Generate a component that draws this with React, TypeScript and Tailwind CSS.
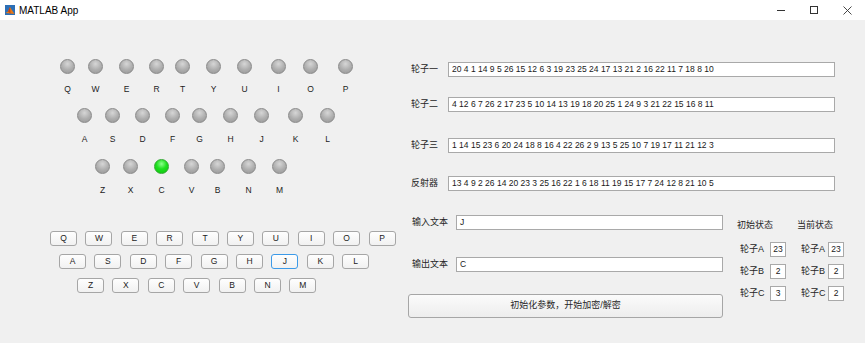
import React from 'react';

// 灯泡：每行的字母和与前一个灯之间的间距
interface Lamp {
  k: string;
  ml: string;
}

const lampRows: { pl: string; pt: string; items: Lamp[] }[] = [
  {
    pl: 'pl-[60px]',
    pt: 'pt-[38.5px]',
    items: [
      { k: 'Q', ml: 'ml-0' },
      { k: 'W', ml: 'ml-[13px]' },
      { k: 'E', ml: 'ml-[16px]' },
      { k: 'R', ml: 'ml-[15px]' },
      { k: 'T', ml: 'ml-[11px]' },
      { k: 'Y', ml: 'ml-[16px]' },
      { k: 'U', ml: 'ml-[16px]' },
      { k: 'I', ml: 'ml-[19px]' },
      { k: 'O', ml: 'ml-[17px]' },
      { k: 'P', ml: 'ml-[20px]' },
    ],
  },
  {
    pl: 'pl-[77px]',
    pt: 'pt-[15px]',
    items: [
      { k: 'A', ml: 'ml-0' },
      { k: 'S', ml: 'ml-[13px]' },
      { k: 'D', ml: 'ml-[15px]' },
      { k: 'F', ml: 'ml-[15px]' },
      { k: 'G', ml: 'ml-[12px]' },
      { k: 'H', ml: 'ml-[16px]' },
      { k: 'J', ml: 'ml-[16px]' },
      { k: 'K', ml: 'ml-[19px]' },
      { k: 'L', ml: 'ml-[17px]' },
    ],
  },
  {
    pl: 'pl-[95px]',
    pt: 'pt-[15.5px]',
    items: [
      { k: 'Z', ml: 'ml-0' },
      { k: 'X', ml: 'ml-[13px]' },
      { k: 'C', ml: 'ml-[16px]' },
      { k: 'V', ml: 'ml-[15px]' },
      { k: 'B', ml: 'ml-[11px]' },
      { k: 'N', ml: 'ml-[16px]' },
      { k: 'M', ml: 'ml-[16px]' },
    ],
  },
];

const keyRows = [
  { pl: 'pl-[50px]', keys: 'QWERTYUIOP'.split('') },
  { pl: 'pl-[59px]', keys: 'ASDFGHJKL'.split('') },
  { pl: 'pl-[77px]', keys: 'ZXCVBNM'.split('') },
];

const rotors = [
  { label: '轮子一', value: '20 4 1 14 9 5 26 15 12 6 3 19 23 25 24 17 13 21 2 16 22 11 7 18 8 10', mt: 'mt-[42px]' },
  { label: '轮子二', value: '4 12 6 7 26 2 17 23 5 10 14 13 19 18 20 25 1 24 9 3 21 22 15 16 8 11', mt: 'mt-[20px]' },
  { label: '轮子三', value: '1 14 15 23 6 20 24 18 8 16 4 22 26 2 9 13 5 25 10 7 19 17 11 21 12 3', mt: 'mt-[26px]' },
  { label: '反射器', value: '13 4 9 2 26 14 20 23 3 25 16 22 1 6 18 11 19 15 17 7 24 12 8 21 10 5', mt: 'mt-[23px]' },
];

const states = [
  { name: '轮子A', init: '23', cur: '23' },
  { name: '轮子B', init: '2', cur: '2' },
  { name: '轮子C', init: '3', cur: '2' },
];

function LampDot({ on }: { on: boolean }) {
  return (
    <div
      className={
        on
          ? 'w-[15px] h-[15px] rounded-full border border-[#2fa82f] bg-[radial-gradient(circle_at_50%_30%,#8dff8d_0%,#1fe01f_45%,#0cc40c_100%)]'
          : 'w-[15px] h-[15px] rounded-full border border-[#8a8a8a] bg-[radial-gradient(circle_at_50%_30%,#d6d6d6_0%,#adadad_55%,#969696_100%)]'
      }
    />
  );
}

function Field({ value, w }: { value: string; w: string }) {
  return (
    <div className={`${w} h-[15px] bg-white border border-[#a9a9a9] flex items-center px-[3px] text-[8.5px] text-[#1a1a1a] leading-none whitespace-nowrap overflow-hidden`}>
      {value}
    </div>
  );
}

function StateBox({ v }: { v: string }) {
  return (
    <div className="w-[16px] h-[15px] bg-white border border-[#a9a9a9] flex items-center justify-center text-[8.5px] leading-none text-[#1a1a1a]">
      {v}
    </div>
  );
}

export default function App() {
  return (
    <div className="w-[865px] h-[343px] bg-[#f0f0f0] flex flex-col font-['Liberation_Sans','Noto_Sans_CJK_SC',sans-serif] text-[#262626] overflow-hidden">
      {/* 标题栏 */}
      <div className="h-[20px] bg-white flex items-center shrink-0">
        <svg className="ml-[5px]" width="10" height="10" viewBox="0 0 10 10">
          <rect x="0" y="0" width="10" height="10" fill="#2c6fb6" />
          <path d="M0.5 8 L3 6.5 L5 2 L6.5 4.5 L9.5 9 L5.5 8.5 Z" fill="#e67a18" />
          <path d="M3 6.5 L5 2 L5.5 8.5 Z" fill="#c94410" />
        </svg>
        <span className="ml-[4px] text-[10px] text-black">MATLAB App</span>
        <div className="ml-auto flex items-center h-full">
          <div className="w-[36px] h-full flex items-center justify-center">
            <div className="w-[8px] h-px bg-[#333]" />
          </div>
          <div className="w-[30px] h-full flex items-center justify-center">
            <div className="w-[8px] h-[8px] border border-[#333]" />
          </div>
          <div className="w-[36px] h-full flex items-center justify-center">
            <svg width="9" height="9" viewBox="0 0 9 9">
              <path d="M0.5 0.5 L8.5 8.5 M8.5 0.5 L0.5 8.5" stroke="#333" strokeWidth="0.9" />
            </svg>
          </div>
        </div>
      </div>

      <div className="flex flex-1">
        {/* 左侧：灯板与键盘 */}
        <div className="w-[404px] shrink-0 flex flex-col">
          {lampRows.map((row, ri) => (
            <div key={ri} className={`flex ${row.pl} ${row.pt}`}>
              {row.items.map((l) => (
                <div key={l.k} className={`${l.ml} w-[15px] flex flex-col items-center`}>
                  <LampDot on={l.k === 'C'} />
                  <span className={`${ri === 0 ? 'mt-[11px]' : 'mt-[12px]'} text-[8.5px] leading-none text-[#1c1c1c]`}>{l.k}</span>
                </div>
              ))}
            </div>
          ))}

          <div className="flex flex-col gap-[8.5px] mt-[36px]">
            {keyRows.map((row, ri) => (
              <div key={ri} className={`flex gap-[8.4px] ${row.pl}`}>
                {row.keys.map((k) => (
                  <div
                    key={k}
                    className={
                      k === 'J'
                        ? 'w-[27px] h-[15px] rounded-[3px] border border-[#3c9ae8] bg-[linear-gradient(#fefefe,#f1f1f1)] flex items-center justify-center text-[8.5px] text-[#1c1c1c]'
                        : 'w-[27px] h-[15px] rounded-[3px] border border-[#a6a6a6] bg-[linear-gradient(#fefefe,#f1f1f1)] flex items-center justify-center text-[8.5px] text-[#1c1c1c]'
                    }
                  >
                    {k}
                  </div>
                ))}
              </div>
            ))}
          </div>
        </div>

        {/* 右侧：转子参数 */}
        <div className="flex-1 flex flex-col">
          {rotors.map((r) => (
            <div key={r.label} className={`flex items-center ${r.mt}`}>
              <span className="ml-[7px] w-[37px] text-[9px] leading-none">{r.label}</span>
              <Field value={r.value} w="w-[387px]" />
            </div>
          ))}

          <div className="flex mt-[24px]">
            <div className="flex flex-col w-[319px]">
              <div className="flex items-center">
                <span className="ml-[8px] w-[44px] text-[9px] leading-none">输入文本</span>
                <Field value="J" w="w-[267px]" />
              </div>
              <div className="flex items-center mt-[27px]">
                <span className="ml-[8px] w-[44px] text-[9px] leading-none">输出文本</span>
                <Field value="C" w="w-[267px]" />
              </div>
              <div className="mt-[22px] ml-[4px] h-[24px] w-[315px] rounded-[3px] border border-[#a6a6a6] bg-[linear-gradient(#fbfbfb,#ededed)] flex items-center justify-center text-[9px]">
                初始化参数，开始加密/解密
              </div>
            </div>

            <div className="ml-[14px] flex flex-col">
              <div className="flex text-[9px] leading-none mt-[6px]">
                <span className="w-[60px]">初始状态</span>
                <span>当前状态</span>
              </div>
              <div className="flex flex-col gap-[7px] mt-[12px]">
                {states.map((s) => (
                  <div key={s.name} className="flex items-center text-[9px] leading-none">
                    <span className="ml-[3px] w-[30px]">{s.name}</span>
                    <StateBox v={s.init} />
                    <span className="ml-[15px] w-[27px]">{s.name}</span>
                    <StateBox v={s.cur} />
                  </div>
                ))}
              </div>
            </div>
          </div>
        </div>
      </div>
    </div>
  );
}
